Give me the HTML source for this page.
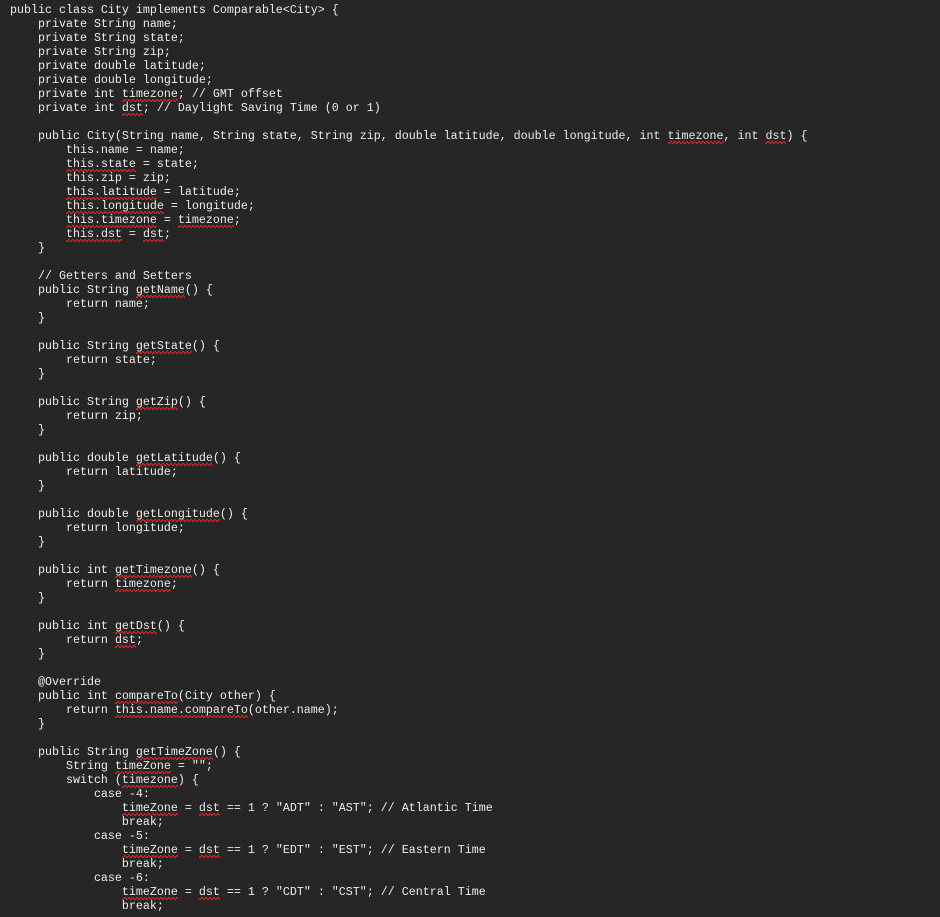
<!DOCTYPE html>
<html><head><meta charset="utf-8"><style>
html,body{margin:0;padding:0;background:#262626;width:940px;height:917px;overflow:hidden}
pre{margin:0;padding:3px 0 0 10px;font-family:"Liberation Mono",monospace;font-size:11.67px;line-height:14px;color:#ececec}
u{text-decoration:none;padding-bottom:1px;
background-image:linear-gradient(135deg,transparent 40%,#d02020 40%,#d02020 60%,transparent 60%),linear-gradient(45deg,transparent 40%,#d02020 40%,#d02020 60%,transparent 60%);
background-size:4px 3px,4px 3px;background-position:0 100%,2px 100%;background-repeat:repeat-x}
</style></head><body><pre>public class City implements Comparable&lt;City&gt; {
    private String name;
    private String state;
    private String zip;
    private double latitude;
    private double longitude;
    private int <u>timezone</u>; // GMT offset
    private int <u>dst</u>; // Daylight Saving Time (0 or 1)

    public City(String name, String state, String zip, double latitude, double longitude, int <u>timezone</u>, int <u>dst</u>) {
        this.name = name;
        <u>this.state</u> = state;
        this.zip = zip;
        <u>this.latitude</u> = latitude;
        <u>this.longitude</u> = longitude;
        <u>this.timezone</u> = <u>timezone</u>;
        <u>this.dst</u> = <u>dst</u>;
    }

    // Getters and Setters
    public String <u>getName</u>() {
        return name;
    }

    public String <u>getState</u>() {
        return state;
    }

    public String <u>getZip</u>() {
        return zip;
    }

    public double <u>getLatitude</u>() {
        return latitude;
    }

    public double <u>getLongitude</u>() {
        return longitude;
    }

    public int <u>getTimezone</u>() {
        return <u>timezone</u>;
    }

    public int <u>getDst</u>() {
        return <u>dst</u>;
    }

    @Override
    public int <u>compareTo</u>(City other) {
        return <u>this.name.compareTo</u>(other.name);
    }

    public String <u>getTimeZone</u>() {
        String <u>timeZone</u> = "";
        switch (<u>timezone</u>) {
            case -4:
                <u>timeZone</u> = <u>dst</u> == 1 ? "ADT" : "AST"; // Atlantic Time
                break;
            case -5:
                <u>timeZone</u> = <u>dst</u> == 1 ? "EDT" : "EST"; // Eastern Time
                break;
            case -6:
                <u>timeZone</u> = <u>dst</u> == 1 ? "CDT" : "CST"; // Central Time
                break;
</pre></body></html>
